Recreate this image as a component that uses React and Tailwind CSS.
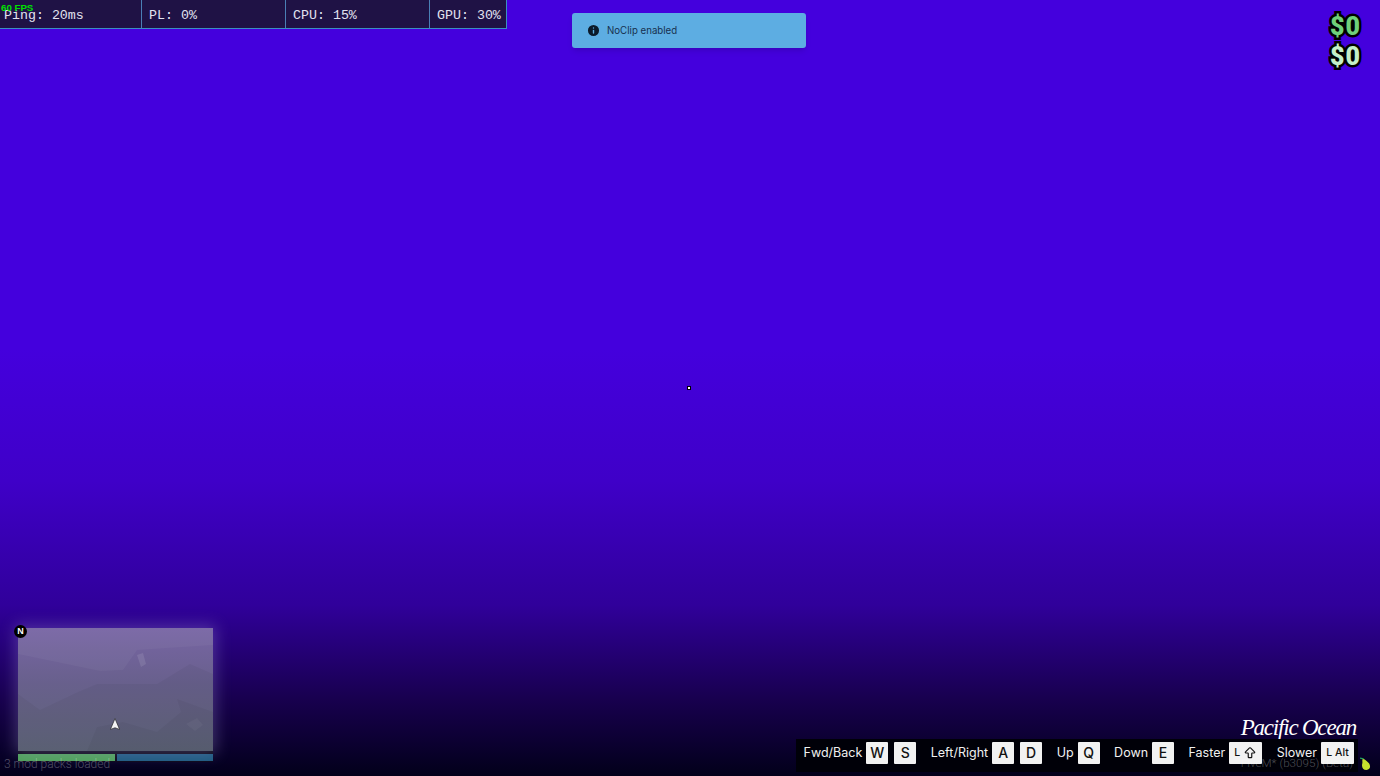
import { ArrowBigUp, Info } from 'lucide-react';

const stats = [
  { label: 'Ping: 20ms', cls: 'w-[142px] pl-[4px]' },
  { label: 'PL: 0%', cls: 'w-[144px] pl-[7px]' },
  { label: 'CPU: 15%', cls: 'w-[144px] pl-[7px]' },
  { label: 'GPU: 30%', cls: 'w-[76px] pl-[7px]' },
];

const controls = [
  { label: 'Fwd/Back', keys: ['W', 'S'] },
  { label: 'Left/Right', keys: ['A', 'D'] },
  { label: 'Up', keys: ['Q'] },
  { label: 'Down', keys: ['E'] },
  { label: 'Faster', keys: ['L'], shift: true },
  { label: 'Slower', keys: ['L Alt'], wide: true },
];

function PerfBar() {
  return (
    <div className="relative flex h-[29px] w-[507px] border-r border-b border-[#3b8fc0] bg-[#1f1245] font-['Liberation_Mono',monospace] text-[13.3px] leading-[31px] text-[#e2e2f0]">
      {stats.map((s, i) => (
        <div key={s.label} className={`${s.cls} h-full shrink-0 ${i < 3 ? 'border-r border-[#4a7fb5]' : ''}`}>
          {s.label}
        </div>
      ))}
      <span className="absolute top-[1px] left-[1px] font-['Liberation_Sans',sans-serif] text-[9.7px] leading-[14px] font-bold text-[#00e000]">
        60 FPS
      </span>
    </div>
  );
}

function Toast() {
  return (
    <div className="absolute top-[13px] left-[572px] flex h-[35px] w-[234px] items-center gap-[6px] rounded-[3px] bg-[#5dade2] pl-[14px] font-['Inter',sans-serif] text-[9.7px] text-[#17304f] shadow-md">
      <Info size={15} fill="#0b1a2a" stroke="#5dade2" strokeWidth={2.2} />
      <span className="pt-[2px]">NoClip enabled</span>
    </div>
  );
}

function Money() {
  return (
    <div className="flex flex-col items-end pt-[12px] pr-[19px] font-['Roboto',sans-serif] text-[25px] leading-[30px] font-black tracking-[1px] [-webkit-text-stroke:5px_#000] [paint-order:stroke_fill]">
      <span className="text-[#6fd07a]">$0</span>
      <span className="text-[#c4efc8]">$0</span>
    </div>
  );
}

function Minimap() {
  return (
    <div className="relative flex w-[195px] flex-col">
      <div className="relative h-[123px] w-full bg-[#6e6a90] shadow-[0_0_14px_3px_rgba(170,160,220,0.3)]">
        <svg viewBox="0 0 195 123" className="h-full w-full">
          <defs>
            <linearGradient id="mapfade" x1="0" y1="0" x2="0" y2="1">
              <stop offset="0" stopColor="#7865a5" />
              <stop offset="0.45" stopColor="#68608c" />
              <stop offset="1" stopColor="#5e6478" />
            </linearGradient>
          </defs>
          <rect width="195" height="123" fill="url(#mapfade)" />
          <path d="M0 0H195V17L119 22L105 42L82 43L0 26Z" fill="#fff" fillOpacity="0.04" />
          <path d="M0 66L22 82L60 64L79 56L139 56L172 36L195 46V123H0Z" fill="#000" fillOpacity="0.04" />
          <path d="M69 123L79 99L105 94L139 104L163 84L159 71L195 84V123Z" fill="#000" fillOpacity="0.04" />
          <path d="M119 27L125 25L128 36L123 39Z" fill="#fff" fillOpacity="0.1" />
          <path d="M168 96L179 90L185 97L177 103Z" fill="#fff" fillOpacity="0.04" />
        </svg>
        <svg viewBox="0 0 12 14" className="absolute top-[90px] left-[92px] h-[12px] w-[10px]">
          <path d="M6 0.5L11.5 13.5L6 11.5L0.5 13.5Z" fill="#f4f4f4" stroke="#222" strokeWidth="0.8" />
        </svg>
        <span className="absolute top-[-3px] left-[-4px] flex h-[13px] w-[13px] items-center justify-center rounded-full bg-black font-['Liberation_Sans',sans-serif] text-[9px] font-bold text-white">
          N
        </span>
      </div>
      <div className="flex h-[11px] gap-[2px] bg-[#0a0618] pt-[3px] pb-px">
        <div className="h-[7px] w-[97px] bg-[#4fa25a]" />
        <div className="h-[7px] w-[96px] bg-[#1e5a80]" />
      </div>
    </div>
  );
}

function Controls() {
  return (
    <div className="relative flex flex-col items-end">
      <div className="mb-[-2px] pr-[2px] font-['Liberation_Serif',serif] text-[23px] leading-[26px] tracking-[-1.2px] text-white italic">
        Pacific Ocean
      </div>
      <div className="flex h-[33px] items-start gap-[14.5px] bg-[#000008] pt-[2px] pr-[4px] pl-[8px] font-['Inter',sans-serif] text-[12.5px] leading-[22px] text-[#f0f0f0]">
        {controls.map((c) => (
          <div key={c.label} className="flex items-center gap-[4px]">
            <span className="pt-px">{c.label}</span>
            <div className="flex gap-[6px]">
              {c.keys.map((k) => (
                <span
                  key={k}
                  className={`flex h-[22px] items-center justify-center gap-[3px] rounded-[1px] bg-[#f2f2f2] font-medium text-[#111] ${c.wide || c.shift ? 'w-[33px] text-[10.5px]' : 'w-[22px] text-[14px]'}`}
                >
                  {k}
                  {c.shift && <ArrowBigUp size={14} strokeWidth={2} />}
                </span>
              ))}
            </div>
          </div>
        ))}
      </div>
    </div>
  );
}

export default function App() {
  return (
    <div className="relative flex h-[776px] w-[1380px] flex-col justify-between overflow-hidden bg-[linear-gradient(to_bottom,#4400dd_0%,#4400dd_45%,#3f00c8_62%,#30009a_78%,#18004f_90%,#02001a_100%)]">
      <div className="flex items-start justify-between">
        <PerfBar />
        <Money />
      </div>
      <Toast />
      <div className="absolute top-[386px] left-[687px] h-[4px] w-[4px] border border-black bg-white" />
      <div className="flex items-end justify-between pr-[22px] pb-[4px] pl-[18px]">
        <div className="pb-[10px]">
          <Minimap />
        </div>
        <Controls />
      </div>
      <span className="absolute bottom-[3px] left-[4px] font-['Roboto',sans-serif] text-[12px] font-light text-white/30">
        3 mod packs loaded
      </span>
      <span className="absolute right-[27px] bottom-[3px] font-['Roboto',sans-serif] text-[11.7px] font-light text-white/30">
        FiveM* (b3095) (Beta)
      </span>
      <svg viewBox="0 0 12 14" className="absolute right-[9px] bottom-[6px] h-[13px] w-[11px]">
        <path d="M0 1L4 2" stroke="#1fa060" strokeWidth="1.4" />
        <path d="M3 2C5.5 2 7 4 9.5 6.5C12 9.5 11.5 14 7 14C3 14 1.5 10.5 2.5 7C3 5 2 3.5 3 2Z" fill="#c6e02e" />
      </svg>
    </div>
  );
}
